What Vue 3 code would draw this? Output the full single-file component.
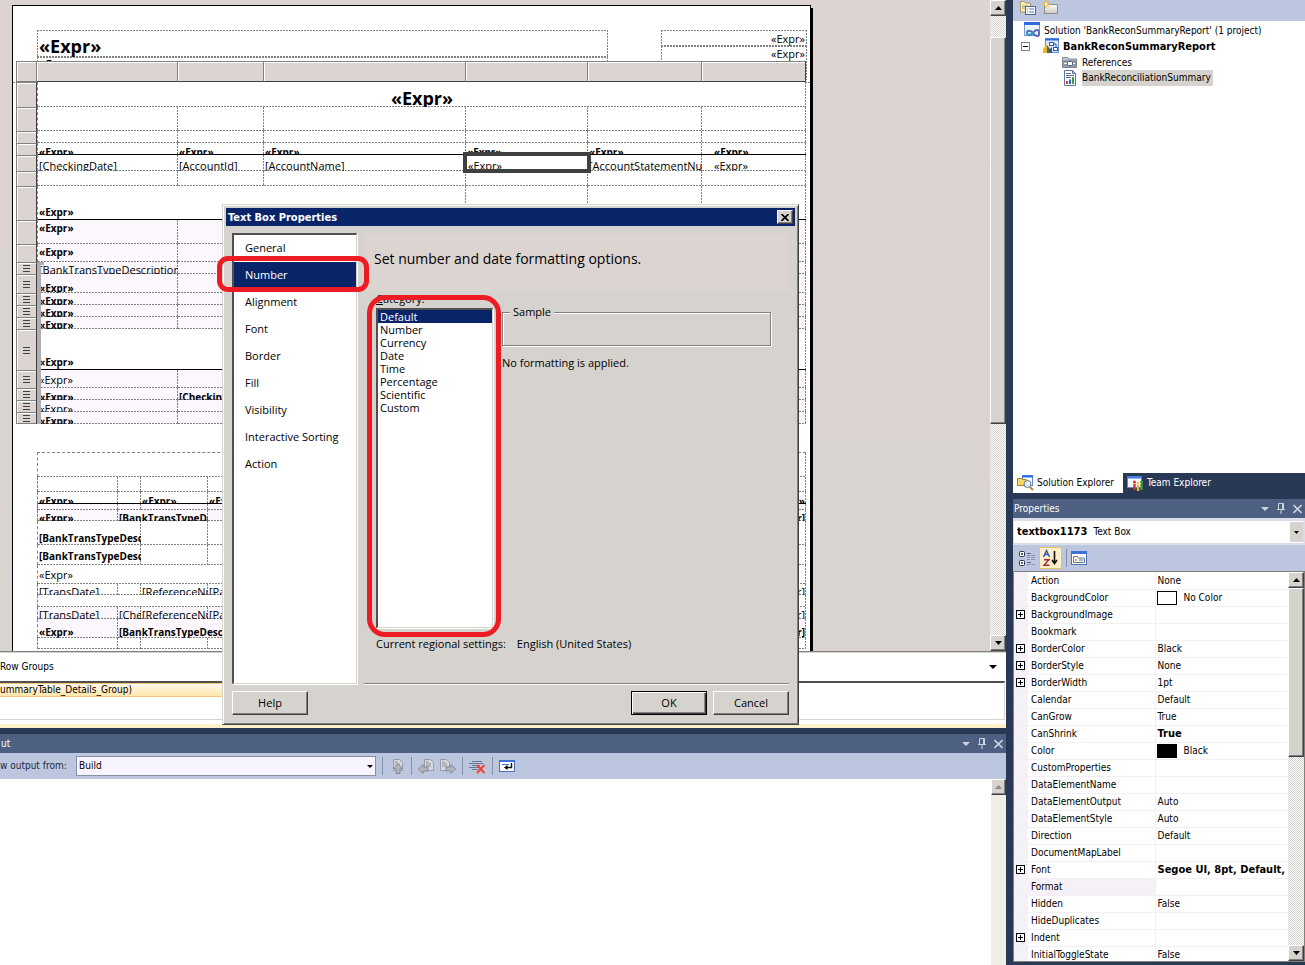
<script setup>
import { ref } from 'vue'

const E = '«Expr»'

const summaryRows = [
  { h: 25, pad: 5, cells: [{ t: E, span: 6, kind: 'big' }] },
  { h: 24, cells: [{}, {}, {}, {}, {}, {}] },
  { h: 12, cells: [{}, {}, {}, {}, {}, {}] },
  { h: 12, pad: 2, solid: true, bold: true, cells: [{ t: E }, { t: E }, { t: E }, { t: E }, { t: E }, { t: E, kind: 'inset' }] },
  { h: 16, pad: 4, cells: [{ t: '[CheckingDate]' }, { t: '[AccountId]' }, { t: '[AccountName]' }, { t: E, selected: true }, { t: '[AccountStatementNumber]' }, { t: E, kind: 'inset' }] },
  { h: 15, cells: [{}, {}, {}, {}, {}, {}] },
  { h: 34, pad: 19, solid: true, bold: true, cells: [{ t: E, span: 3 }, {}, {}, {}] },
  { h: 24, pad: 1, bold: true, tint: true, cells: [{ t: E }, { span: 5 }] },
  { h: 18, pad: 1, bold: true, tint: true, cells: [{ t: E }, { span: 5 }] },
  { h: 12, pad: 1, tint: true, group: true, cells: [{ t: '[BankTransTypeDescription]' }, { span: 5 }] },
  { h: 19, pad: 7, bold: true, tint: true, group: true, cells: [{ t: E }, { span: 5 }] },
  { h: 12, pad: 1, bold: true, tint: true, group: true, cells: [{ t: E }, { span: 5 }] },
  { h: 12, pad: 1, bold: true, tint: true, group: true, cells: [{ t: E }, { span: 5 }] },
  { h: 12, pad: 1, bold: true, tint: true, group: true, cells: [{ t: E }, { span: 5 }] },
  { h: 41, pad: 26, bold: true, solid: true, group: true, cells: [{ t: E, span: 6 }] },
  { h: 18, pad: 3, tint: true, group: true, cells: [{ t: E }, { span: 5 }] },
  { h: 12, pad: 2, bold: true, tint: true, group: true, cells: [{ t: E }, { t: '[CheckingDate]', span: 5 }] },
  { h: 12, pad: 2, tint: true, group: true, cells: [{ t: E }, { span: 5 }] },
  { h: 12, pad: 2, bold: true, tint: true, group: true, cells: [{ t: E }, { span: 5 }] }
]

const detailRows = [
  { h: 25, cells: [{ span: 5 }] },
  { h: 15, cells: [{}, {}, {}, {}, {}] },
  { h: 12, pad: 2, solid: true, bold: true, cells: [{ t: E }, {}, { t: E }, { t: E }, { t: '»', kind: 'end' }] },
  { h: 6, tint: true, cells: [{}, {}, {}, {}, {}] },
  { h: 11, pad: 1, bold: true, tint: true, cells: [{ t: E }, { t: '[BankTransTypeDesc]', span: 2 }, {}, { t: 'r]', kind: 'end' }] },
  { h: 24, pad: 10, bold: true, cells: [{ t: '[BankTransTypeDesc]', span: 2 }, {}, {}, {}] },
  { h: 20, pad: 4, bold: true, cells: [{ t: '[BankTransTypeDesc]', span: 2 }, {}, {}, {}] },
  { h: 19, pad: 3, cells: [{ t: E, span: 5 }] },
  { h: 11, pad: 1, cells: [{ t: '[TransDate]' }, {}, { t: '[ReferenceNumber]' }, { t: '[Payee]' }, { t: 'r]', kind: 'end' }] },
  { h: 12, cells: [{ span: 5 }] },
  { h: 12, pad: 1, tint: true, cells: [{ t: '[TransDate]' }, { t: '[Check]' }, { t: '[ReferenceNumber]' }, { t: '[Payee]' }, { t: 'r]', kind: 'end' }] },
  { h: 19, pad: 6, bold: true, tint: true, cells: [{ t: E }, { t: '[BankTransTypeDesc]', span: 3 }, { t: 'r]', kind: 'end' }] },
  { h: 11, cells: [{}, {}, {}, {}, {}] }
]

const pages = ['General', 'Number', 'Alignment', 'Font', 'Border', 'Fill', 'Visibility', 'Interactive Sorting', 'Action']
const page = ref('Number')
const categories = ['Default', 'Number', 'Currency', 'Date', 'Time', 'Percentage', 'Scientific', 'Custom']
const category = ref('Default')

const props = [
  { n: 'Action', v: 'None' },
  { n: 'BackgroundColor', v: 'No Color', swatch: 'none' },
  { n: 'BackgroundImage', plus: true },
  { n: 'Bookmark' },
  { n: 'BorderColor', v: 'Black', plus: true },
  { n: 'BorderStyle', v: 'None', plus: true },
  { n: 'BorderWidth', v: '1pt', plus: true },
  { n: 'Calendar', v: 'Default' },
  { n: 'CanGrow', v: 'True' },
  { n: 'CanShrink', v: 'True', bold: true },
  { n: 'Color', v: 'Black', swatch: 'black' },
  { n: 'CustomProperties' },
  { n: 'DataElementName' },
  { n: 'DataElementOutput', v: 'Auto' },
  { n: 'DataElementStyle', v: 'Auto' },
  { n: 'Direction', v: 'Default' },
  { n: 'DocumentMapLabel' },
  { n: 'Font', v: 'Segoe UI, 8pt, Default,', plus: true, bold: true },
  { n: 'Format', current: true },
  { n: 'Hidden', v: 'False' },
  { n: 'HideDuplicates' },
  { n: 'Indent', plus: true },
  { n: 'InitialToggleState', v: 'False' }
]
</script>

<template>
  <div class="ide">
    <main class="left">
      <section class="designer">
        <div class="canvas">
          <div class="sheet">
            <div class="item title-item"><span class="big">{{ E }}</span></div>
            <div class="item sub-item"><b>{{ E }}</b></div>
            <div class="item date-item">{{ E }}</div>
            <div class="item page-item">{{ E }}</div>
            <div class="body-edge"></div>

            <div class="tablix summary">
              <div class="cols">
                <span v-for="n in 7" :key="n" class="grip"></span>
              </div>
              <div v-for="(r, i) in summaryRows" :key="i" class="row" :class="{ solid: r.solid, tint: r.tint, bold: r.bold, group: r.group }" :style="{ height: r.h + 'px' }">
                <span class="grip"><i v-if="r.group" class="bars"></i></span>
                <div v-for="(c, j) in r.cells" :key="j" class="cell" :class="[c.kind, { selected: c.selected }]" :style="{ gridColumn: 'span ' + (c.span || 1), paddingTop: (r.pad || 0) + 'px' }">{{ c.t }}</div>
              </div>
              <div class="group-bar"></div>
            </div>

            <div class="tablix detail">
              <div v-for="(r, i) in detailRows" :key="i" class="row" :class="{ solid: r.solid, tint: r.tint, bold: r.bold }" :style="{ height: r.h + 'px' }">
                <div v-for="(c, j) in r.cells" :key="j" class="cell" :class="c.kind" :style="{ gridColumn: 'span ' + (c.span || 1), paddingTop: (r.pad || 0) + 'px' }">{{ c.t }}</div>
              </div>
            </div>
          </div>
        </div>
        <div class="scroll">
          <button class="sbtn" aria-label="Scroll up"><svg width="7" height="4"><path d="M3.5 0 7 4H0z" /></svg></button>
          <span class="gap-a"></span><span class="thumb thumb-a"></span><span class="gap-b"></span>
          <button class="sbtn" aria-label="Scroll down"><svg width="7" height="4"><path d="M0 0h7L3.5 4z" /></svg></button>
        </div>
      </section>

      <section class="groups">
        <header><span>Row Groups</span><button aria-label="Group options"><svg width="8" height="4"><path d="M0 0h8L4 4z" /></svg></button></header>
        <div class="group-list"><div class="group-item">ummaryTable_Details_Group)</div></div>
      </section>

      <section class="output">
        <header class="panel-head">
          <span>ut</span>
          <span class="head-tools">
            <button aria-label="Window position"><svg width="8" height="16"><path d="M0 6h8L4 10z" fill="#ced4df" /></svg></button>
            <button aria-label="Auto hide"><svg width="8" height="16"><path d="M1.5 8V2.500h5V8M0 8.500h8M4 9v4M5.500 3v5" fill="none" stroke="#ced4df" /></svg></button>
            <button aria-label="Close"><svg width="9" height="16"><path d="M.5 4l8 8M8.500 4l-8 8" fill="none" stroke="#ced4df" stroke-width="1.600" /></svg></button>
          </span>
        </header>
        <div class="out-tools">
          <label for="src">w output from:</label>
          <span class="combo"><select id="src"><option>Build</option></select><svg width="6" height="3"><path d="M0 0h6L3 3z" /></svg></span>
          <i class="sep"></i>
          <button aria-label="Find message">
            <svg width="16" height="16"><path d="M4.500 1.500h6l3 3v8h-9z" fill="#d8d9df" stroke="#989ba5" /><path d="M6 4h3M6 6h5" stroke="#8d909b" /><path d="M9 6l4.500 4.500H11V15.500H7V10.500H4.500z" fill="#b3b5bd" stroke="#868995" /></svg>
          </button>
          <i class="sep"></i>
          <button aria-label="Previous message">
            <svg width="16" height="16"><path d="M6.500 1.500h6l3 3v8h-9z" fill="#d8d9df" stroke="#989ba5" /><path d="M8 4h3M8 6h5M8 8h5" stroke="#8d909b" /><path d="M.5 11L5 6.500V9h5v4H5v2.500z" fill="#b3b5bd" stroke="#868995" /></svg>
          </button>
          <button aria-label="Next message">
            <svg width="16" height="16"><path d="M.5 1.500h6l3 3v8h-9z" fill="#d8d9df" stroke="#989ba5" /><path d="M2 4h3M2 6h5M2 8h5" stroke="#8d909b" /><path d="M15.500 11L11 6.500V9H6v4h5v2.500z" fill="#b3b5bd" stroke="#868995" /></svg>
          </button>
          <i class="sep"></i>
          <button aria-label="Clear all">
            <svg width="17" height="16"><path d="M3 3.500h10M0 5.500h14M3 7.500h8M0 9.500h9M3 11.500h6" stroke="#6b7692" /><path d="M8 7l7.500 8M15.500 7L8 15" stroke="#ee4327" stroke-width="2" /></svg>
          </button>
          <i class="sep"></i>
          <button aria-label="Word wrap">
            <svg width="16" height="16"><rect x=".5" y="2.500" width="15" height="11" fill="#fff" stroke="#4a71b5" /><path d="M0 3h16" stroke="#3d73d6" stroke-width="2" /><path d="M3 6.500h7" stroke="#4a71b5" /><path d="M12.500 5v4.500H7" fill="none" stroke="#111" stroke-width="1.400" /><path d="M5 9.500L8.500 7v5z" /></svg>
          </button>
        </div>
        <div class="out-body">
          <div class="out-text"></div>
          <div class="out-scroll"><button class="sbtn" disabled aria-label="Scroll up"><svg width="7" height="4"><path d="M3.500 0 7 4H0z" fill="#8a8781" /></svg></button></div>
        </div>
      </section>
    </main>

    <aside class="side">
      <div class="sol-tools">
        <button aria-label="Properties">
          <svg width="16" height="16"><path d="M.5 1.500h4l1 1.500h5v9H.5z" fill="#fbeeb3" stroke="#a8986a" /><path d="M2 6h6M2 8h5" stroke="#a8986a" /><rect x="5.500" y="6.500" width="10" height="8" fill="#f6f9ff" stroke="#51688f" /><path d="M7 9h1M7 12h1M9 9h5M9 12h5" stroke="#5c7fc0" /></svg>
        </button>
        <button aria-label="Show all files">
          <svg width="17" height="16"><defs><linearGradient id="fld" x2="0" y2="1"><stop stop-color="#fff" /><stop offset="1" stop-color="#cfcac0" /></linearGradient></defs><path d="M2.500 3.500V13.500h13V4.500H8z" fill="url(#fld)" stroke="#8c8a86" /><path d="M4 0v8M0 4h8M1 1l6 6M7 1L1 7" stroke="#efb52a" /><circle cx="4" cy="4" r="1.500" fill="#fff3b5" /></svg>
        </button>
      </div>

      <ul class="tree" role="tree" aria-label="Solution Explorer">
        <li role="treeitem" class="lvl0">
          <svg width="16" height="16"><rect x=".5" y=".5" width="15" height="13" fill="#eef4fd" stroke="#7396cf" /><path d="M0 1.500h16" stroke="#2f6be0" stroke-width="3" /><path d="M9 11c-2-3-6-3-6 0s4 3 6 0 6-5 6 0-4 3-6 0" fill="none" stroke="#5969b5" stroke-width="2" /><path d="M3 11c1 3 4 2 6-1" fill="none" stroke="#2aa6d0" stroke-width="2" /></svg>
          <span>Solution 'BankReconSummaryReport' (1 project)</span>
        </li>
        <li role="treeitem" class="lvl1">
          <button class="minus" aria-label="Collapse"></button>
          <svg width="16" height="16"><rect x="2.500" y=".5" width="13" height="14" fill="#dbe8fd" stroke="#6a8fcf" /><path d="M2 1.500h14" stroke="#2f6be0" stroke-width="2" /><rect x="6.500" y="4.500" width="4" height="3" fill="#fff" stroke="#2b55b0" /><rect x="10.500" y="9.500" width="4" height="3" fill="#fff" stroke="#2b55b0" /><path d="M10.500 6h2.500v3.500" fill="none" stroke="#2b55b0" /><path d="M0 15V11l4-5v9z" fill="#e8b52c" /><path d="M4 15V7l3 4v4z" fill="#566b3d" /><path d="M7 15v-4l2-2v6z" fill="#2d55a0" /></svg>
          <b>BankReconSummaryReport</b>
        </li>
        <li role="treeitem" class="lvl2">
          <svg width="16" height="16"><path d="M.5 3.500h5l1 1.500h8v8.500H.5z" fill="#c9ced6" stroke="#7d8590" /><rect x="1" y="6" width="13" height="7" fill="#8f9bad" /><path d="M2 9.500h3M11 9.500h2" stroke="#fff" /><rect x="5.500" y="7.500" width="5" height="4" rx="1" fill="#fff" stroke="#4b5b7a" /></svg>
          <span>References</span>
        </li>
        <li role="treeitem" class="lvl2" aria-selected="true">
          <svg width="16" height="16"><path d="M2.500.5h8l3 3v12h-11z" fill="#fff" stroke="#5a76a8" /><path d="M10.500.5v3h3z" fill="#bccbe6" stroke="#5a76a8" /><path d="M4 3.500h5M4 5.500h8M4 7.500h5" stroke="#5e7096" /><path d="M5 11v3" stroke="#e0392c" stroke-width="2" /><path d="M8 9.500V14" stroke="#2f68d6" stroke-width="2" /><path d="M11 7v7" stroke="#37a03f" stroke-width="2" /></svg>
          <span class="picked">BankReconciliationSummary</span>
        </li>
      </ul>

      <div class="tabs" role="tablist">
        <button role="tab" aria-selected="true">
          <svg width="17" height="16"><rect x="5.500" y=".5" width="10" height="10" fill="#fff" stroke="#5d87cf" /><path d="M5 1.500h11" stroke="#2f6be0" stroke-width="2" /><path d="M.5 3.500h4l1 1h4v6h-9z" fill="#f5d56a" stroke="#a98424" /><circle cx="10.500" cy="9" r="3.500" fill="#dff1fb" fill-opacity=".9" stroke="#5d7796" /><path d="M13 12l3 3" stroke="#b8862b" stroke-width="2" /></svg>
          Solution Explorer
        </button>
        <button role="tab" aria-selected="false">
          <svg width="17" height="16"><rect x=".5" y="1.500" width="14" height="11" fill="#f4f8ff" stroke="#5d87cf" /><path d="M0 2.500h15" stroke="#3c7be8" stroke-width="2" /><g stroke-width="2.400"><path d="M7.500 9v6" stroke="#d5392d" /><path d="M11 10v6" stroke="#e8b52c" /><path d="M14.500 9v6" stroke="#3c9c3f" /></g><circle cx="7.500" cy="7" r="1.600" fill="#d5392d" /><circle cx="11" cy="8" r="1.600" fill="#f2c867" /><circle cx="14.500" cy="7" r="1.600" fill="#3c9c3f" /></svg>
          Team Explorer
        </button>
      </div>

      <header class="panel-head">
        <span>Properties</span>
        <span class="head-tools">
          <button aria-label="Window position"><svg width="8" height="16"><path d="M0 6h8L4 10z" fill="#ced4df" /></svg></button>
          <button aria-label="Auto hide"><svg width="8" height="16"><path d="M1.500 8V2.500h5V8M0 8.500h8M4 9v4M5.500 3v5" fill="none" stroke="#ced4df" /></svg></button>
          <button aria-label="Close"><svg width="9" height="16"><path d="M.5 4l8 8M8.500 4l-8 8" fill="none" stroke="#ced4df" stroke-width="1.600" /></svg></button>
        </span>
      </header>
      <div class="obj-wrap">
        <button class="obj" aria-haspopup="listbox"><b>textbox1173</b><span>Text Box</span><i><svg width="5" height="3"><path d="M0 0h5L2.500 3z" /></svg></i></button>
      </div>
      <div class="prop-tools">
        <button aria-label="Categorized">
          <svg width="17" height="17"><rect x="1.500" y="1.500" width="5" height="5" rx="1" fill="#fff" stroke="#24344f" /><rect x="1.500" y="10.500" width="5" height="5" rx="1" fill="#fff" stroke="#24344f" /><path d="M3 4h2M4 3v2M3 13h2M4 12v2" stroke="#24344f" /><path d="M9 3.500h4M9 12.500h4" stroke="#59657c" /><path d="M9 5.500h3M13 5.500h4M9 7.500h3M13 7.500h4M9 14.500h3M13 14.500h4M9 9.500h3M13 9.500h4" stroke="#8794b0" /></svg>
        </button>
        <button class="on" aria-label="Alphabetical">
          <svg width="18" height="18"><path d="M1.500 8L4.500 1.500 7.500 8M2.500 5.500h4" fill="none" stroke="#2858b8" stroke-width="1.400" /><path d="M2 10.700h5L2 16.300h5.500" fill="none" stroke="#a02b3c" stroke-width="1.400" /><path d="M12.500 2v12M10 11l2.500 3.500L15 11" fill="none" stroke="#111" stroke-width="1.600" /></svg>
        </button>
        <i class="sep"></i>
        <button aria-label="Property pages">
          <svg width="16" height="16"><rect x=".5" y="1.500" width="15" height="13" fill="#fff" stroke="#4a71b5" /><path d="M0 2.500h16" stroke="#3d73d6" stroke-width="3" /><path d="M2.500 12.500v-6h4l1 1.500h6v4.500z" fill="#fdf6dc" stroke="#6b7692" /><path d="M4 10h2M8 10h4" stroke="#3d73d6" /></svg>
        </button>
      </div>
      <div class="grid-wrap">
        <div class="grid-clip">
          <table>
            <tbody>
              <tr v-for="p in props" :key="p.n" :class="{ current: p.current }">
                <td class="gut"><button v-if="p.plus" class="plus" :aria-label="'Expand ' + p.n"></button></td>
                <th scope="row">{{ p.n }}</th>
                <td class="val"><i v-if="p.swatch" class="swatch" :class="p.swatch"></i><b v-if="p.bold">{{ p.v }}</b><template v-else>{{ p.v }}</template></td>
              </tr>
            </tbody>
          </table>
        </div>
        <div class="scroll">
          <button class="sbtn" aria-label="Scroll up"><svg width="7" height="4"><path d="M3.500 0 7 4H0z" /></svg></button>
          <span class="thumb thumb-c"></span><span class="gap-c"></span>
          <button class="sbtn" aria-label="Scroll down"><svg width="7" height="4"><path d="M0 0h7L3.500 4z" /></svg></button>
        </div>
      </div>
    </aside>

    <div class="dialog" role="dialog" aria-labelledby="dlg-title">
      <header class="dlg-head">
        <b id="dlg-title">Text Box Properties</b>
        <button class="x" aria-label="Close"><svg width="8" height="7"><path d="M.5 0l7 7M7.500 0l-7 7" stroke="#000" stroke-width="1.700" /></svg></button>
      </header>
      <div class="dlg-main">
        <nav class="pages">
          <button v-for="p in pages" :key="p" :class="{ on: p === page }" @click="page = p">{{ p }}</button>
          <span class="mark mark-page"></span>
        </nav>
        <section class="content">
          <h2>Set number and date formatting options.</h2>
          <div class="fields">
            <div class="cat">
              <span id="cat-label"><u>C</u>ategory:</span>
              <ul role="listbox" aria-labelledby="cat-label" tabindex="0">
                <li v-for="c in categories" :key="c" role="option" :aria-selected="c === category" @click="category = c">{{ c }}</li>
              </ul>
              <span class="mark mark-cat"></span>
            </div>
            <div class="sample">
              <fieldset><legend>Sample</legend></fieldset>
              <p>No formatting is applied.</p>
            </div>
          </div>
          <p class="region"><span>Current regional settings:</span><span>English (United States)</span></p>
        </section>
      </div>
      <footer>
        <button class="btn help">Help</button>
        <button class="btn ok">OK</button>
        <button class="btn">Cancel</button>
      </footer>
    </div>
  </div>
</template>

<style>
body {
  margin: 0;
}
</style>

<style scoped>
.ide {
  --ui: 'DejaVu Sans Condensed', 'DejaVu Sans', sans-serif;
  --segoe: 'Open Sans', 'Noto Sans', sans-serif;
  --face: #d6d3ce;
  --navy: #0a246a;
  --dash-x: repeating-linear-gradient(90deg, #808080 0 2px, transparent 2px 3px);
  --dash-y: repeating-linear-gradient(180deg, #808080 0 2px, transparent 2px 3px);
  position: relative;
  display: flex;
  gap: 7px;
  height: 100vh;
  overflow: hidden;
  background: #293955;
  color: #000;
  font: 10px/14px var(--ui);
}
.ide * { box-sizing: border-box; }
button { border: 0; padding: 0; background: none; color: inherit; font: inherit; display: flex; align-items: center; justify-content: center; }
svg { display: block; flex: none; }
ul { list-style: none; margin: 0; padding: 0; }
b { font-size: 11px; }
.left { flex: 1; min-width: 0; display: flex; flex-direction: column; }
.side { width: 292px; flex: none; display: flex; flex-direction: column; }

/* report surface */
.designer { flex: 651 1 0; min-height: 0; display: flex; }
.canvas { flex: 1; min-width: 0; overflow: hidden; position: relative; background: linear-gradient(180deg, #ddd3d2, #d9d4cf); }
.sheet {
  position: absolute; left: 12px; top: 5px; width: 799px; height: 900px;
  background: #fff; border: 1px solid #000; box-shadow: 2px 3px 0 #000;
  font: 11px/14px var(--segoe);
}
.item { position: absolute; background: var(--dash-x) left top / 100% 1px no-repeat, var(--dash-x) left bottom / 100% 1px no-repeat, var(--dash-y) left top / 1px 100% no-repeat, var(--dash-y) right top / 1px 100% no-repeat; padding: 0 2px; overflow: hidden; }
.title-item { left: 24px; top: 24px; width: 571px; height: 27px; padding-top: 5px; }
.sub-item { left: 24px; top: 51px; width: 571px; height: 24px; }
.date-item { left: 648px; top: 24px; width: 146px; height: 16px; text-align: right; padding-top: 2px; }
.page-item { left: 648px; top: 40px; width: 146px; height: 34px; text-align: right; padding-top: 1px; }
.body-edge { position: absolute; left: 0; right: 0; top: 76px; height: 1px; background: var(--dash-x); }
.big { font-size: 18px; line-height: 22px; font-weight: 700; }
.tablix { position: absolute; }
.summary { left: 3px; top: 55px; }
.summary .cols, .summary .row { display: grid; grid-template-columns: 21px 141px 86px 202px 122px 114px 104px; }
.cols { height: 21px; }
.grip { background: #dbd4d0; border: 1px solid #808080; border-width: 1px 0 0 1px; box-shadow: inset 1px 1px 0 #fff; }
.cols .grip { border-width: 1px 1px 1px 0; border-bottom-color: #404040; }
.cols .grip:first-child { border-left-width: 1px; border-bottom-color: #808080; }
.cols .grip:last-child { border-right-color: #404040; }
.row .grip { border-right: 1px solid #404040; display: flex; align-items: center; justify-content: center; }
.summary .row:nth-last-child(2) .grip { border-bottom: 1px solid #808080; }
.bars { width: 7px; height: 7px; background: repeating-linear-gradient(180deg, #404040 0 1px, transparent 1px 3px); }
.cell {
  min-width: 0; overflow: hidden; white-space: nowrap; padding: 0 1px;
  background: var(--dash-x) left bottom / 100% 1px no-repeat, var(--dash-y) right top / 1px 100% no-repeat, #fff;
}
.tint .cell { background-color: #fcf7fd; }
.solid .cell { background-image: linear-gradient(#000, #000), var(--dash-y); }
.bold .cell { font-weight: 700; font-size: 10px; }
.summary .grip + .cell, .detail .cell:first-child { border-left: 1px dashed #808080; }
.tablix .cell.big { text-align: center; font-size: 18px; line-height: 22px; font-weight: 700; }
.cell.inset { padding-left: 12px; }
.cell.end { text-align: right; }
.cell.selected { position: relative; overflow: visible; height: 16px; padding-left: 2px; }
.cell.selected::after { content: ''; position: absolute; left: -3px; right: -3px; top: -3px; bottom: -2px; border: 4px solid #404040; }
.group-bar { position: absolute; left: 21px; top: 201px; bottom: 0; width: 4px; background: #b2adb0; }
.group-bar::before { content: ''; position: absolute; left: 0; top: 0; width: 7px; height: 3px; background: #b2adb0; }
.detail { left: 24px; top: 446px; }
.detail .row { display: grid; grid-template-columns: 81px 23px 67px 498px 100px; }
.detail .row:first-child .cell { border-top: 1px dashed #808080; }

/* scroll bars */
.scroll { width: 16px; flex: none; display: flex; flex-direction: column; background: repeating-conic-gradient(#fff 0 25%, #d6d3ce 0 50%) 0 0 / 2px 2px; }
.sbtn { width: 16px; height: 16px; flex: none; background: var(--face); border: 1px solid #404040; border-left-color: #fff; border-top-color: #fff; box-shadow: inset -1px -1px 0 #808080; }
.thumb { background: var(--face); border: 1px solid #404040; border-left-color: #fff; border-top-color: #fff; box-shadow: inset -1px -1px 0 #808080; }
.gap-a { flex: 21 1 0; }
.thumb-a { flex: 386 1 0; }
.gap-b { flex: 212 1 0; }
.thumb-c { flex: 168 1 0; }
.gap-c { flex: 190 1 0; }

/* row groups */
.groups { background: #fff; border-top: 1px solid #808080; border-bottom: 4px solid #fff0c9; height: 77px; flex: none; display: flex; flex-direction: column; }
.groups header { height: 29px; flex: none; border-top: 1px solid #d6d3ce; display: flex; align-items: center; justify-content: space-between; padding-right: 9px; }
.group-list { height: 39px; border: solid #d6d3ce; border-width: 0 1px 1px 0; border-top: 2px solid #505050; margin-right: 1px; }
.group-item { width: 78%; height: 14px; line-height: 12px; border: 1px solid #f5c47c; border-width: 1px 0; background: linear-gradient(180deg, #fffaf0, #ffe6a8); }

/* output */
.output { flex: 186 1 45px; min-height: 0; margin-top: 6px; display: flex; flex-direction: column; }
.panel-head { height: 19px; flex: none; background: #4d6082; color: #fff; display: flex; align-items: center; justify-content: space-between; padding: 0 3px 0 1px; }
.head-tools { display: flex; gap: 8px; }
.out-tools { height: 26px; flex: none; background: #bcc7df; display: flex; align-items: center; color: #1b293e; }
.out-tools label { width: 76px; white-space: nowrap; }
.combo { position: relative; width: 300px; height: 20px; margin-right: 6px; }
.combo select { width: 100%; height: 20px; appearance: none; border: 1px solid #8591a7; border-radius: 0; background: #f7f3ff; padding: 0 2px; font: inherit; color: #000; }
.combo svg { position: absolute; right: 3px; top: 9px; }
.sep { width: 1px; height: 18px; background: #8591a7; }
.out-tools button { margin: 0 3px; }
.out-tools .sep + button { margin-left: 6px; }
.out-tools button:has(+ .sep) { margin-right: 6px; }
.out-body { flex: 1; min-height: 0; display: flex; background: #fff; }
.out-text { flex: 1; }
.out-scroll { width: 15px; background: #f0ede7; }
.out-scroll .sbtn { width: 15px; }

/* solution explorer */
.sol-tools { height: 21px; flex: none; background: #bcc7df; display: flex; gap: 6px; padding-left: 7px; align-items: flex-start; }
.tree { flex: 453 1 0; min-height: 0; overflow: hidden; background: #fff; padding-top: 1px; }
.tree li { height: 16px; display: flex; align-items: center; gap: 4px; white-space: nowrap; }
.tree span, .tree b { padding-top: 1px; }
.lvl0 { padding-left: 11px; }
.lvl1 { padding-left: 8px; }
.lvl2 { padding-left: 49px; }
.minus { width: 9px; height: 9px; border: 1px solid #808080; background: linear-gradient(#000, #000) center / 5px 1px no-repeat; margin-right: 9px; }
.picked { background: var(--face); padding-right: 2px; height: 16px; }
.tabs { height: 20px; flex: none; display: flex; margin-bottom: 6px; color: #fff; }
.tabs button { gap: 3px; padding: 0 9px 0 4px; }
.tabs button[aria-selected='true'] { background: #fff; color: #000; }

/* properties */
.obj-wrap { height: 27px; flex: none; background: #d9deea; padding: 3px 2px 2px 1px; }
.obj { width: 100%; height: 22px; background: #fff; justify-content: flex-start; gap: 6px; padding-left: 3px; }
.obj i { margin-left: auto; width: 13px; height: 20px; background: var(--face); display: flex; align-items: center; justify-content: center; }
.prop-tools { height: 26px; flex: none; background: #bcc7df; display: flex; align-items: center; gap: 4px; padding-left: 5px; }
.prop-tools .on { width: 23px; height: 22px; background: #ffefc8; border: 1px solid #e5c365; }
.grid-wrap { flex: 390 1 0; min-height: 0; display: flex; border: 1px solid #808080; background: #fff; margin-bottom: 3px; }
.grid-clip { flex: 1; overflow: hidden; }
table { border-collapse: collapse; width: 100%; table-layout: fixed; }
tr { height: 17px; }
td, th { padding: 0; height: 17px; font-weight: 400; text-align: left; white-space: nowrap; overflow: hidden; border-bottom: 1px solid #f3eff4; line-height: 16px; }
.gut { width: 14px; background: #f6f1f7; }
th { width: 127px; padding-left: 3px; border-right: 1px solid #f3eff4; }
.val { padding-left: 2px; }
.current th { background: #f6f1f7; }
.plus { width: 9px; height: 9px; margin: 0 0 1px 2px; border: 1px solid #000; background: linear-gradient(#000, #000) center / 5px 1px no-repeat, linear-gradient(#000, #000) center / 1px 5px no-repeat, #fff; }
.swatch { display: inline-block; vertical-align: top; margin: 1px 7px 0 -1px; width: 20px; height: 14px; border: 1px solid #000; }
.swatch.black { background: #000; }

/* dialog */
.dialog {
  position: absolute; left: 222px; top: 204px; width: 577px; height: 521px;
  display: flex; flex-direction: column;
  background: var(--face); border: 1px solid #404040; border-left-color: #d6d3ce; border-top-color: #d6d3ce;
  box-shadow: inset 1px 1px 0 #fff, inset -1px -1px 0 #808080;
  padding: 3px; font: 11px/14px var(--segoe);
}
.dlg-head { height: 18px; flex: none; background: var(--navy); color: #fff; display: flex; align-items: center; justify-content: space-between; padding: 0 2px; font-family: var(--ui); }
.dlg-head b { padding-top: 1px; }
.x { width: 16px; height: 14px; background: var(--face); border: 1px solid #404040; border-left-color: #fff; border-top-color: #fff; box-shadow: inset -1px -1px 0 #808080; }
.dlg-main { display: flex; gap: 6px; padding: 7px 6px 0; }
.pages { position: relative; width: 125px; height: 451px; margin-right: 1px; flex: none; background: #fff; border: 1px solid #d6d3ce; border-top: 2px solid #505050; border-left: 2px solid #505050; box-shadow: 1px 1px 0 #fff; }
.pages button { width: 100%; height: 27px; padding: 0 0 2px 11px; justify-content: flex-start; }
.pages .on { background: var(--navy); color: #fff; }
.mark { position: absolute; border: 5px solid #ed1c24; pointer-events: none; }
.mark-page { left: -17px; top: 21px; width: 152px; height: 36px; border-radius: 11px; }
.mark-cat { left: -9px; top: 3px; width: 134px; height: 342px; border-radius: 18px; }
.content { flex: 1; min-width: 0; border-bottom: 1px solid #808080; box-shadow: 0 1px 0 #fff; }
h2 { margin: 1px 0 0 1px; height: 57px; background: #dcd4d1; padding: 14px 9px; font: 14px/22px var(--segoe); }
.fields { display: flex; gap: 9px; padding: 1px 18px 0 12px; }
.cat { position: relative; width: 117px; flex: none; }
.cat > span { display: block; }
.cat ul { height: 320px; margin-top: 2px; background: #fff; border: 1px solid #d6d3ce; border-top: 2px solid #505050; border-left: 2px solid #505050; box-shadow: 1px 1px 0 #fff; }
.cat li { height: 13px; line-height: 13px; padding-left: 2px; }
.cat li[aria-selected='true'] { background: var(--navy); color: #fff; }
.sample { flex: 1; }
fieldset { margin: 13px 0 0; height: 41px; padding: 0 7px; border: 1px solid #808080; box-shadow: 1px 1px 0 #fff, inset 1px 1px 0 #fff; }
legend { padding: 0 3px; background: var(--face); }
p { margin: 10px 0 0; }
.region { display: flex; gap: 11px; padding-left: 12px; margin-top: 9px; }
footer { display: flex; gap: 6px; padding: 7px 6px 0; }
.btn { width: 76px; height: 24px; background: var(--face); border: 1px solid #404040; border-left-color: #fff; border-top-color: #fff; box-shadow: inset -1px -1px 0 #808080; }
.help { margin-right: auto; }
.ok { border: 1px solid #000; box-shadow: inset 1px 1px 0 #fff, inset -1px -1px 0 #404040, inset -2px -2px 0 #808080; }
</style>
